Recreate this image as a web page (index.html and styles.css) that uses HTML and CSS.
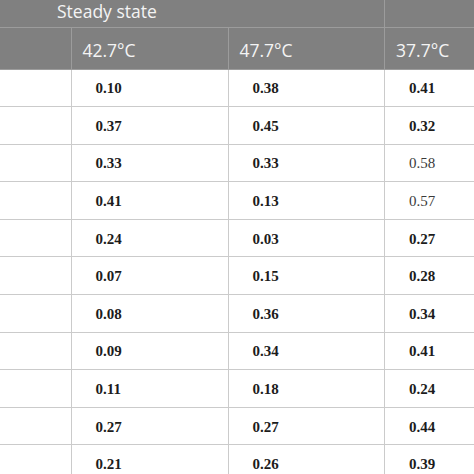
FILE: index.html
```html
<!DOCTYPE html>
<html>
<head>
<meta charset="utf-8">
<link rel="stylesheet" href="styles.css">
</head>
<body>
<table class="data">
  <colgroup>
    <col class="c1"><col class="c2"><col class="c3"><col class="c4">
  </colgroup>
  <thead>
    <tr class="h1">
      <th colspan="3" class="span">Steady state</th>
      <th></th>
    </tr>
    <tr class="h2">
      <th class="blank"></th>
      <th>42.7°C</th>
      <th>47.7°C</th>
      <th>37.7°C</th>
    </tr>
  </thead>
  <tbody>
    <tr><td></td><td>0.10</td><td>0.38</td><td>0.41</td></tr>
    <tr><td></td><td>0.37</td><td>0.45</td><td>0.32</td></tr>
    <tr><td></td><td>0.33</td><td>0.33</td><td class="plain">0.58</td></tr>
    <tr><td></td><td>0.41</td><td>0.13</td><td class="plain">0.57</td></tr>
    <tr><td></td><td>0.24</td><td>0.03</td><td>0.27</td></tr>
    <tr><td></td><td>0.07</td><td>0.15</td><td>0.28</td></tr>
    <tr><td></td><td>0.08</td><td>0.36</td><td>0.34</td></tr>
    <tr><td></td><td>0.09</td><td>0.34</td><td>0.41</td></tr>
    <tr><td></td><td>0.11</td><td>0.18</td><td>0.24</td></tr>
    <tr><td></td><td>0.27</td><td>0.27</td><td>0.44</td></tr>
    <tr><td></td><td>0.21</td><td>0.26</td><td>0.39</td></tr>
  </tbody>
</table>
</body>
</html>
```
FILE: styles.css
```css
html, body {
  margin: 0;
  padding: 0;
  background: #ffffff;
  overflow: hidden;
}

.data {
  border-collapse: collapse;
  table-layout: fixed;
  width: 474px;
}

.c1 { width: 71px; }
.c2 { width: 157px; }
.c3 { width: 156.5px; }
.c4 { width: 89.5px; }

.data thead th {
  background: #808080;
  color: #f4f4f4;
  font-family: "Open Sans", "Liberation Sans", sans-serif;
  font-weight: normal;
  font-size: 17.5px;
  text-align: left;
  padding: 0 0 0 11px;
  border: 1px solid #9c9c9c;
  border-top: none;
}

.data thead th:last-child {
  border-right: none;
}

.data thead .h1 th {
  height: 27px;
  box-sizing: border-box;
  vertical-align: top;
  padding-top: 0;
  line-height: 22px;
}

.data thead .h1 th.span {
  padding-left: 57px;
  border-left: none;
}

.data thead .h2 th {
  height: 42px;
  box-sizing: border-box;
  padding-top: 3px;
  line-height: 20px;
}

.data thead .h2 th.blank {
  border-left: none;
}

.data tbody td {
  height: 37.6px;
  box-sizing: border-box;
  padding: 2px 0 0 24px;
  border: 1px solid #cbcbcb;
  font-family: "Liberation Serif", "Times New Roman", serif;
  font-weight: bold;
  font-size: 15px;
  color: #1c1c1c;
  vertical-align: middle;
}

.data tbody td:first-child {
  border-left: none;
}

.data tbody td:last-child {
  border-right: none;
}

.data tbody td.plain {
  font-weight: normal;
  color: #3a3a3a;
}
```
